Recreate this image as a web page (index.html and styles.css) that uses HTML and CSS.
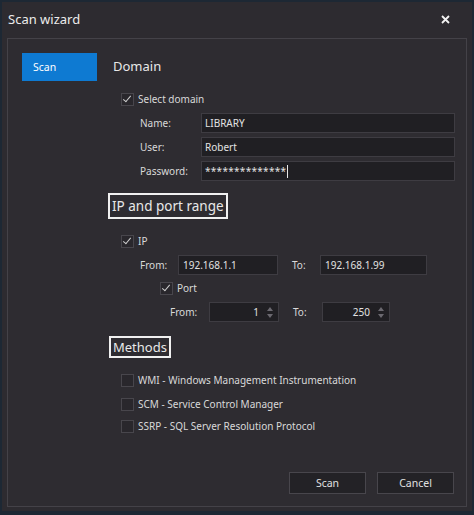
FILE: index.html
```html
<!DOCTYPE html>
<html>
<head>
<meta charset="utf-8">
<link rel="stylesheet" href="styles.css">
</head>
<body>
<div class="window">
  <div class="titlebar">
    <span class="title">Scan wizard</span>
    <svg class="close" width="9" height="9" viewBox="0 0 9 9"><path d="M1 1 L8 8 M8 1 L1 8" stroke="#f2f2f2" stroke-width="1.8"/></svg>
  </div>
  <div class="panel">
    <div class="body">
      <div class="nav"><div class="nav-item">Scan</div></div>
      <div class="main">
        <div class="heading">Domain</div>
        <div class="check-row r-select"><span class="cb checked"></span><span>Select domain</span></div>
        <div class="field r-name"><span class="lbl">Name:</span><div class="input">LIBRARY</div></div>
        <div class="field r-user"><span class="lbl">User:</span><div class="input">Robert</div></div>
        <div class="field r-pass"><span class="lbl">Password:</span><div class="input pass">**************<span class="caret"></span></div></div>

        <div class="heading boxed h-ip">IP and port range</div>
        <div class="check-row r-ip"><span class="cb checked"></span><span>IP</span></div>
        <div class="range r-iprange">
          <span class="lbl-from">From:</span><div class="input ip1">192.168.1.1</div>
          <span class="lbl-to">To:</span><div class="input ip2">192.168.1.99</div>
        </div>
        <div class="check-row r-port"><span class="cb checked"></span><span>Port</span></div>
        <div class="range r-portrange">
          <span class="lbl-from2">From:</span><div class="input spin sp1"><span class="num">1</span><span class="arrows"><i class="up"></i><i class="down"></i></span></div>
          <span class="lbl-to2">To:</span><div class="input spin sp2"><span class="num">250</span><span class="arrows"><i class="up"></i><i class="down"></i></span></div>
        </div>

        <div class="heading boxed h-methods">Methods</div>
        <div class="check-row r-wmi"><span class="cb"></span><span>WMI - Windows Management Instrumentation</span></div>
        <div class="check-row r-scm"><span class="cb"></span><span>SCM - Service Control Manager</span></div>
        <div class="check-row r-ssrp"><span class="cb"></span><span>SSRP - SQL Server Resolution Protocol</span></div>
      </div>
    </div>
    <div class="footer">
      <div class="btn">Scan</div>
      <div class="btn">Cancel</div>
    </div>
  </div>
</div>
</body>
</html>
```

FILE: styles.css
```css
html, body {
  margin: 0;
  padding: 0;
}
body {
  background: #1d2834;
  width: 474px;
  height: 515px;
  overflow: hidden;
  font-family: "Noto Sans", "Open Sans", sans-serif;
  font-size: 10px;
  color: #d9d9d9;
}
.window {
  margin: 2px 2px 0 2px;
  height: 509px;
  background: #2d2b30;
  display: flex;
  flex-direction: column;
}
.titlebar {
  height: 36px;
  display: flex;
  align-items: center;
  justify-content: space-between;
  padding: 0 22px 0 6px;
}
.title {
  font-size: 13px;
  color: #ececec;
  margin-top: -2px;
}
.close {
  margin-top: -2px;
}
.panel {
  flex: 1;
  margin: 0 5px 4px 5px;
  border: 1px solid #444248;
  background: #2e2c31;
  display: flex;
  flex-direction: column;
}
.body {
  display: flex;
  padding: 14px 0 0 14px;
}
.nav {
  width: 75px;
  margin-right: 11px;
}
.nav-item {
  height: 28px;
  background: #0e7ad2;
  color: #ffffff;
  font-size: 10.5px;
  line-height: 28px;
  padding-left: 11px;
}
.main {
  display: flex;
  flex-direction: column;
  flex: 1;
}
.heading {
  font-size: 13px;
  color: #e8e8e8;
  height: 28px;
  line-height: 26px;
  padding-left: 5px;
  align-self: flex-start;
}
.heading.boxed {
  border: 2px solid #f0f0f0;
  font-size: 13.5px;
  padding: 0 2px;
  height: 22px;
  line-height: 22px;
}
.heading.h-ip { margin-top: 12px; }
.heading.h-methods {
  margin-top: 14px;
  margin-left: 1px;
  height: 18px;
  line-height: 18px;
  font-size: 13px;
}

.check-row {
  display: flex;
  align-items: center;
  height: 18px;
  padding-left: 13px;
}
.cb {
  width: 11px;
  height: 11px;
  border: 1px solid #48464c;
  background: #29272c;
  margin-right: 4px;
  position: relative;
}
.cb.checked::after {
  content: "";
  position: absolute;
  left: 3px;
  top: 0px;
  width: 3px;
  height: 7px;
  border-right: 1.3px solid #cfcfcf;
  border-bottom: 1.3px solid #cfcfcf;
  transform: rotate(40deg);
}
.r-select { margin-top: 9px; }
.r-ip { margin-top: 13px; }
.r-port { margin-top: 4px; padding-left: 52px; }
.r-wmi { margin-top: 13px; }
.r-scm { margin-top: 6px; }
.r-ssrp { margin-top: 4px; }

.field {
  display: flex;
  align-items: center;
  padding-left: 32px;
  height: 20px;
}
.r-name { margin-top: 5px; }
.r-user, .r-pass { margin-top: 4px; }
.lbl {
  width: 61px;
}
.input {
  box-sizing: border-box;
  height: 20px;
  border: 1px solid #3e3c42;
  background: #201f23;
  color: #e2e2e2;
  display: flex;
  align-items: center;
  padding-left: 3px;
}
.field .input {
  width: 254px;
}
.pass {
  letter-spacing: 0.3px;
}
.caret {
  display: inline-block;
  width: 1px;
  height: 13px;
  background: #e8e8e8;
  margin-left: 1px;
}
.range {
  display: flex;
  align-items: center;
  height: 20px;
  margin-top: 5px;
}
.lbl-from { margin-left: 32px; width: 38px; }
.ip1 { width: 100px; padding-left: 4px; }
.lbl-to { margin-left: 14px; width: 28px; }
.ip2 { width: 107px; padding-left: 4px; }
.lbl-from2 { margin-left: 62px; width: 39px; }
.lbl-to2 { margin-left: 14px; width: 29px; }
.spin {
  justify-content: flex-end;
  padding-right: 5px;
}
.sp1 { width: 70px; }
.sp2 { width: 68px; }
.num {
  margin-right: 8px;
}
.arrows {
  display: flex;
  flex-direction: column;
  gap: 3px;
}
.arrows i {
  width: 0;
  height: 0;
  border-left: 3.5px solid transparent;
  border-right: 3.5px solid transparent;
}
.arrows .up { border-bottom: 4px solid #6b6970; }
.arrows .down { border-top: 4px solid #6b6970; }

.footer {
  margin-top: auto;
  display: flex;
  justify-content: flex-end;
  gap: 11px;
  padding: 0 12px 12px 0;
}
.btn {
  box-sizing: border-box;
  width: 77px;
  height: 22px;
  border: 1px solid #48464c;
  background: #232226;
  color: #e0e0e0;
  font-size: 10.5px;
  display: flex;
  align-items: center;
  justify-content: center;
}
```
